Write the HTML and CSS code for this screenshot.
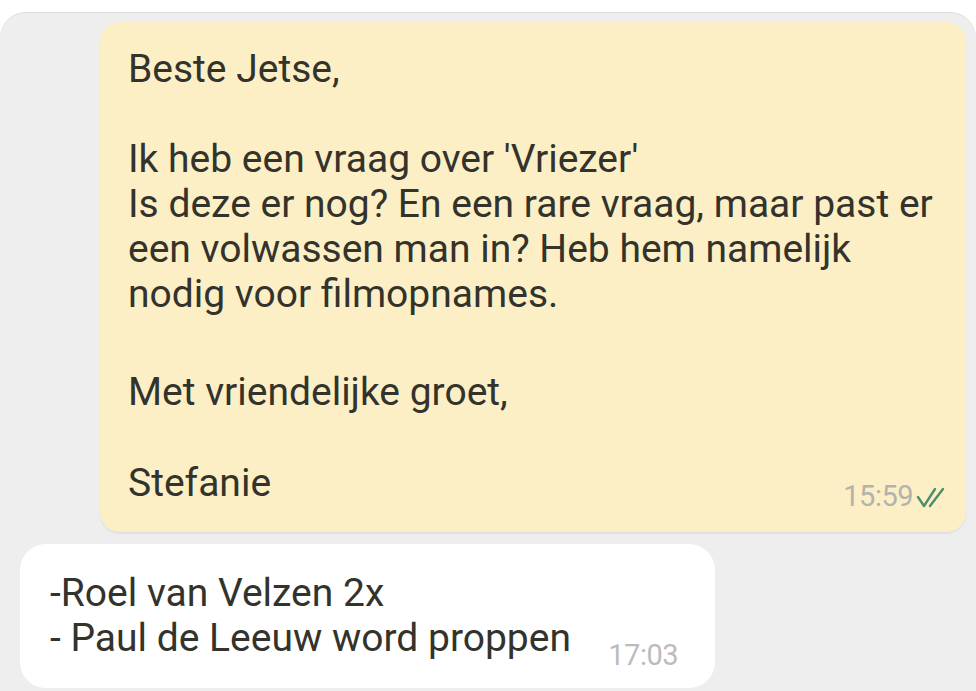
FILE: index.html
```html
<html>
<head>
    <meta charset="utf-8">
    <link rel="stylesheet" href="styles.css">
</head>
<body>
    <div class="chat">
        <div class="bubble outgoing">
            <p class="greeting">Beste Jetse,</p>
            <p class="body-text">Ik heb een vraag over 'Vriezer'<br>
            Is deze er nog? En een rare vraag, maar past er<br>
            een volwassen man in? Heb hem namelijk<br>
            nodig voor filmopnames.</p>
            <p class="closing">Met vriendelijke groet,</p>
            <div class="last-line">
                <span>Stefanie</span>
                <span class="meta">15:59
                    <svg class="ticks" width="32" height="22" viewBox="0 0 32 22">
                        <path d="M3 11 L9 20 L20 3" fill="none" stroke="#4d8f6c" stroke-width="2.4" stroke-linecap="round" stroke-linejoin="round"/>
                        <path d="M15 20 L28 3" fill="none" stroke="#4d8f6c" stroke-width="2.4" stroke-linecap="round"/>
                    </svg>
                </span>
            </div>
        </div>

        <div class="bubble incoming">
            <p>-Roel van Velzen 2x</p>
            <div class="last-line">
                <span>- Paul de Leeuw word proppen</span>
                <span class="meta">17:03</span>
            </div>
        </div>
    </div>
</body>
</html>
```

FILE: styles.css
```css
body {
    margin: 0;
    background-color: #ffffff;
    font-family: Roboto, 'Liberation Sans', sans-serif;
    overflow: hidden;
}

.chat {
    margin-top: 12px;
    height: 700px;
    background-color: #eeeeee;
    border-top: 1px solid #dcdcdc;
    border-radius: 26px 26px 0 0;
    padding-top: 9px;
}

.bubble {
    color: #33332c;
    font-size: 39px;
    line-height: 45px;
    white-space: nowrap;
}

.bubble p {
    margin: 0;
}

.greeting {
    margin-bottom: 45px !important;
}

.body-text {
    margin-bottom: 53px !important;
}

.closing {
    margin-bottom: 46px !important;
}

.outgoing {
    margin-left: 100px;
    margin-right: 10px;
    background-color: #fcefc6;
    border-radius: 20px;
    padding: 25px 19px 26px 28px;
    box-shadow: 0 2px 2px rgba(0, 0, 0, 0.06);
}

.incoming {
    margin-top: 12px;
    margin-left: 20px;
    width: 695px;
    box-sizing: border-box;
    background-color: #ffffff;
    border-radius: 26px;
    padding: 27px 37px 27px 30px;
}

.last-line {
    display: flex;
    justify-content: space-between;
    align-items: flex-end;
}

.meta {
    font-size: 29px;
    line-height: 29px;
    color: #b3b3ad;
    letter-spacing: -0.5px;
    display: flex;
    align-items: center;
    gap: 2px;
    margin-bottom: -5px;
}

.incoming .meta {
    color: #bcbcbc;
    margin-bottom: -9px;
}
```
